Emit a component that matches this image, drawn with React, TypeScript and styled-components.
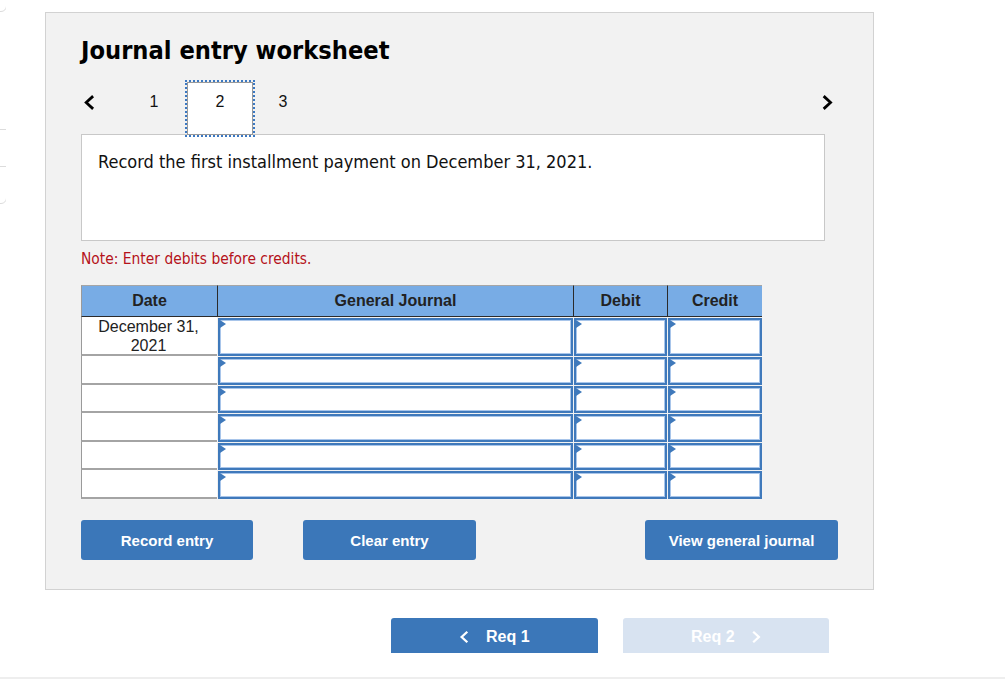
import React from 'react';
import styled, { createGlobalStyle } from 'styled-components';

const GlobalStyle = createGlobalStyle`
    body {
        margin: 0;
        background: #ffffff;
        font-family: "Liberation Sans", Arial, sans-serif;
    }
`;

const Page = styled.div`
    position: relative;
    width: 1005px;
    height: 684px;
    overflow: hidden;
    background: #fff;
`;

const Top = styled.div`
    display: flex;
    align-items: flex-start;
`;

const Sidebar = styled.div`
    width: 6px;
    flex-shrink: 0;
    overflow: hidden;
    display: flex;
    flex-direction: column;
`;

const SideCard = styled.div<{ $top: number; $height: number }>`
    margin-left: -200px;
    margin-top: ${p => p.$top}px;
    width: 205px;
    height: ${p => p.$height}px;
    border: 1px solid #dcdcdc;
    border-radius: 0 0 6px 0;
    display: flex;
    flex-direction: column;
`;

const SideSplit = styled.div`
    flex: 1;
    & + & {
        border-top: 1px solid #dcdcdc;
    }
`;

const Panel = styled.div`
    margin: 12px 0 0 39px;
    width: 829px;
    height: 578px;
    background: #f2f2f2;
    border: 1px solid #d2d2d2;
    padding: 0 0 0 35px;
    box-sizing: border-box;
`;

const Inner = styled.div`
    width: 744px;
`;

const Title = styled.h2`
    margin: 23px 0 0 0;
    font-family: "DejaVu Sans", Verdana, sans-serif;
    font-stretch: condensed;
    font-weight: bold;
    font-size: 25.2px;
    line-height: 30px;
    color: #000;
`;

const TabRow = styled.div`
    display: flex;
    align-items: flex-start;
    height: 55px;
    margin-top: 16px;
    margin-bottom: -3px;
    position: relative;
    z-index: 1;
`;

const Arrow = styled.button`
    background: none;
    border: none;
    padding: 0;
    margin-top: 11px;
    width: 16px;
    height: 18px;
    display: flex;
    align-items: center;
    justify-content: center;
    cursor: pointer;
`;

const TabNum = styled.div<{ $active?: boolean; $width?: number; $lead?: number }>`
    width: ${p => p.$width ?? 66}px;
    margin-left: ${p => p.$lead ?? 0}px;
    height: 53px;
    display: flex;
    align-items: flex-start;
    justify-content: center;
    padding-top: 10px;
    font-size: 16px;
    line-height: 18px;
    color: #111;
    box-sizing: border-box;
    background: ${p => (p.$active ? '#fff' : 'transparent')};
    border: 1px solid ${p => (p.$active ? '#9a9a9a' : 'transparent')};
    outline: ${p => (p.$active ? '2px dotted #3b78c2' : 'none')};
    outline-offset: 0;
`;

const Spacer = styled.div`
    flex: 1;
`;

const Prompt = styled.div`
    background: #fff;
    border: 1px solid #c8c8c8;
    padding: 17px 16px 0 16px;
    font-family: "DejaVu Sans", Verdana, sans-serif;
    font-stretch: condensed;
    font-size: 18px;
    line-height: 20px;
    color: #111;
    box-sizing: border-box;
    height: 107px;
`;

const Note = styled.div`
    margin-top: 10px;
    font-family: "DejaVu Sans", Verdana, sans-serif;
    font-stretch: condensed;
    font-size: 15.4px;
    line-height: 16px;
    color: #b5121b;
`;

const Table = styled.div`
    margin-top: 18px;
    width: 681px;
    display: grid;
    grid-template-columns: 136px 356px 94px 95px;
    grid-template-rows: 32px 39px 29px 28px 29px 28px 29px;
`;

const HeadCell = styled.div<{ $first?: boolean }>`
    background: #78ace5;
    border-top: 1px solid #a6a6a6;
    border-bottom: 1px solid #2b2b2b;
    border-left: 1px solid ${p => (p.$first ? '#9a9a9a' : '#2b2b2b')};
    display: flex;
    align-items: center;
    justify-content: center;
    font-weight: bold;
    font-size: 16px;
    color: #222;
    box-sizing: border-box;
`;

const DateCell = styled.div`
    background: #fff;
    border-left: 1px solid #9a9a9a;
    border-bottom: 2px solid #a4a4a4;
    display: flex;
    align-items: center;
    justify-content: center;
    text-align: center;
    font-size: 16px;
    line-height: 19px;
    color: #222;
    box-sizing: border-box;
    padding: 1px 2px 0 0;
`;

const EntryCell = styled.div`
    position: relative;
    margin: 1px 0 0 1px;
    background: #fff;
    border: 2px solid #3f79bb;
    box-shadow: inset 0 0 0 1px #a8c5ea;
    box-sizing: border-box;

    &::before {
        content: '';
        position: absolute;
        left: 0;
        top: 0;
        border-top: 4px solid transparent;
        border-bottom: 4px solid transparent;
        border-left: 6px solid #3f79bb;
    }
`;

const ButtonRow = styled.div`
    display: flex;
    width: 757px;
    margin-top: 21px;
`;

const ActionButton = styled.button<{ $width: number; $gap?: number }>`
    width: ${p => p.$width}px;
    height: 40px;
    margin-left: ${p => p.$gap ?? 0}px;
    background: #3b77b9;
    border: none;
    border-radius: 3px;
    color: #fff;
    font-family: "Liberation Sans", Arial, sans-serif;
    font-weight: bold;
    font-size: 15px;
    cursor: pointer;
`;

const ReqRow = styled.div`
    display: flex;
    margin: 28px 0 0 391px;
    gap: 25px;
`;

const ReqButton = styled.button<{ $disabled?: boolean }>`
    width: ${p => (p.$disabled ? 206 : 207)}px;
    height: 35px;
    background: ${p => (p.$disabled ? '#d8e3f1' : '#3b77b9')};
    border: none;
    border-radius: 3px 3px 0 0;
    color: #fff;
    font-family: "Liberation Sans", Arial, sans-serif;
    font-weight: bold;
    font-size: 16px;
    display: flex;
    align-items: center;
    justify-content: center;
    gap: 16px;
    padding: 3px 0 0 0;
`;

const BottomLine = styled.div`
    margin-top: 24px;
    border-top: 2px solid #eeeeee;
`;

const Chevron = ({ dir, color, size }: { dir: 'left' | 'right'; color: string; size: number }) => (
    <svg width={size * 0.75} height={size} viewBox="0 0 12 16" fill="none">
        <path
            d={dir === 'left' ? 'M9.5 2 L3 8 L9.5 14' : 'M2.5 2 L9 8 L2.5 14'}
            stroke={color}
            strokeWidth="2.6"
            strokeLinecap="butt"
            strokeLinejoin="miter"
        />
    </svg>
);

const rows = [
    { date: 'December 31,\n2021' },
    { date: '' },
    { date: '' },
    { date: '' },
    { date: '' },
    { date: '' },
];

const App: React.FC = () => {
    return (
        <Page>
            <GlobalStyle />
            <Top>
                <Sidebar>
                    <SideCard $top={-20} $height={30}>
                        <SideSplit />
                    </SideCard>
                    <SideCard $top={117} $height={73}>
                        <SideSplit />
                        <SideSplit />
                    </SideCard>
                </Sidebar>
                <Panel>
                    <Inner>
                        <Title>Journal entry worksheet</Title>
                        <TabRow>
                            <Arrow aria-label="previous">
                                <Chevron dir="left" color="#000" size={17} />
                            </Arrow>
                            <TabNum $lead={24}>1</TabNum>
                            <TabNum $active>2</TabNum>
                            <TabNum $width={60}>3</TabNum>
                            <Spacer />
                            <Arrow aria-label="next" style={{ marginRight: -10 }}>
                                <Chevron dir="right" color="#000" size={17} />
                            </Arrow>
                        </TabRow>
                        <Prompt>Record the first installment payment on December 31, 2021.</Prompt>
                        <Note>Note: Enter debits before credits.</Note>
                        <Table>
                            <HeadCell $first>Date</HeadCell>
                            <HeadCell>General Journal</HeadCell>
                            <HeadCell>Debit</HeadCell>
                            <HeadCell>Credit</HeadCell>
                            {rows.map((r, i) => (
                                <React.Fragment key={i}>
                                    <DateCell>
                                        {r.date.split('\n').map((l, j) => (
                                            <React.Fragment key={j}>
                                                {j > 0 && <br />}
                                                {l}
                                            </React.Fragment>
                                        ))}
                                    </DateCell>
                                    <EntryCell />
                                    <EntryCell />
                                    <EntryCell />
                                </React.Fragment>
                            ))}
                        </Table>
                        <ButtonRow>
                            <ActionButton $width={172}>Record entry</ActionButton>
                            <ActionButton $width={173} $gap={50}>Clear entry</ActionButton>
                            <Spacer />
                            <ActionButton $width={193}>View general journal</ActionButton>
                        </ButtonRow>
                    </Inner>
                </Panel>
            </Top>
            <ReqRow>
                <ReqButton>
                    <Chevron dir="left" color="#fff" size={14} />
                    <span>Req 1</span>
                </ReqButton>
                <ReqButton $disabled>
                    <span>Req 2</span>
                    <Chevron dir="right" color="#fff" size={14} />
                </ReqButton>
            </ReqRow>
            <BottomLine />
        </Page>
    );
};

export default App;
